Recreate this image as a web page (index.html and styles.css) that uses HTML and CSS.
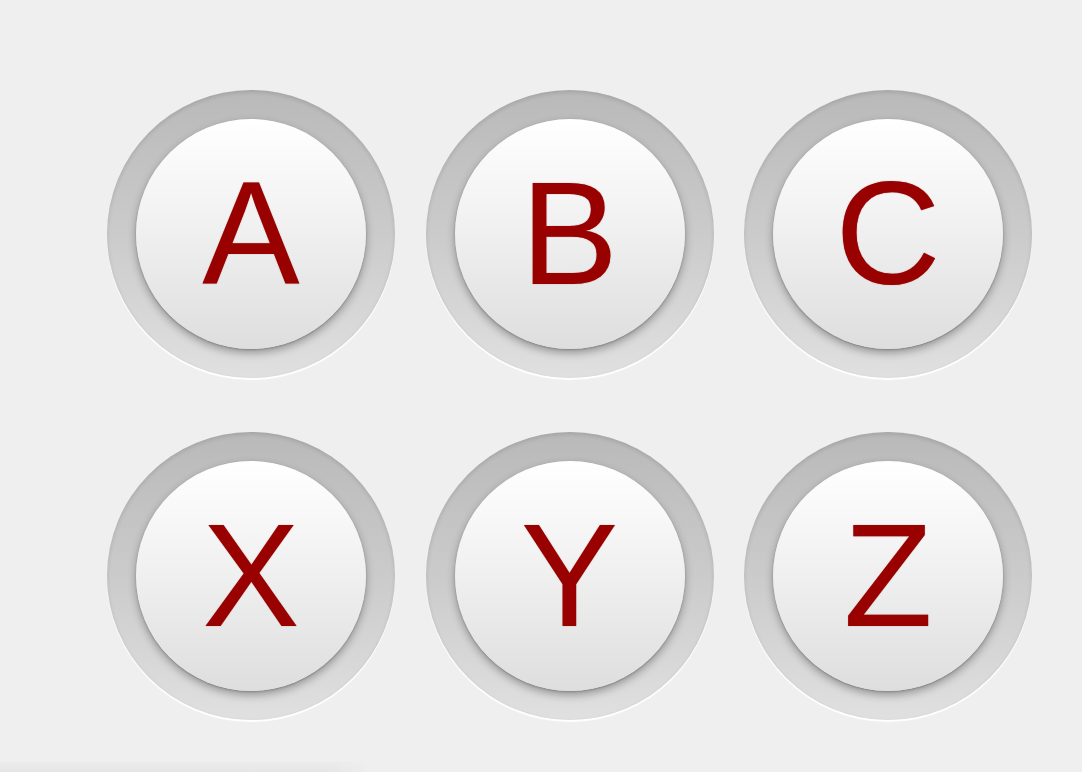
FILE: index.html
```html
<!DOCTYPE html>
<html>
<head>
<meta charset="utf-8">
<link rel="stylesheet" href="styles.css">
</head>
<body>
<div class="pad">
  <div class="keys">
    <div class="ring"><div class="key">A</div></div>
    <div class="ring"><div class="key">B</div></div>
    <div class="ring"><div class="key">C</div></div>
    <div class="ring"><div class="key">X</div></div>
    <div class="ring"><div class="key">Y</div></div>
    <div class="ring"><div class="key">Z</div></div>
  </div>
</div>
<div class="band"></div>
</body>
</html>
```

FILE: styles.css
```css
html, body {
  margin: 0;
  padding: 0;
  background: #efefef;
  overflow: hidden;
}
body {
  height: 772px;
}
.pad {
  padding: 90px 0 0 107px;
}
.keys {
  display: grid;
  grid-template-columns: repeat(3, 288px);
  column-gap: 30.5px;
  row-gap: 54px;
}
.ring {
  width: 288px;
  height: 288px;
  border-radius: 50%;
  background: linear-gradient(to bottom, #b9b9b9 0%, #cbcbcb 50%, #e0e0e0 100%);
  box-shadow: 0 2px 1px #ffffff, inset 0 2px 4px rgba(0, 0, 0, 0.12);
  display: flex;
  align-items: center;
  justify-content: center;
}
.key {
  width: 230px;
  height: 230px;
  border-radius: 50%;
  background: linear-gradient(to bottom, #ffffff 0%, #f1f1f1 45%, #dedede 100%);
  box-shadow: 0 4px 9px rgba(0, 0, 0, 0.32), 0 1px 2px rgba(0, 0, 0, 0.2);
  display: flex;
  align-items: center;
  justify-content: center;
  font-family: "Liberation Sans", Arial, sans-serif;
  font-size: 146px;
  line-height: 1;
  color: #990000;
  text-shadow: 0 0 1px rgba(120, 0, 0, 0.6);
}
.band {
  margin-top: 42px;
  width: 370px;
  height: 10px;
  background: linear-gradient(to bottom, #ececec, #e6e6e6);
  -webkit-mask-image: linear-gradient(to right, #000 90%, transparent);
  mask-image: linear-gradient(to right, #000 90%, transparent);
}
```
